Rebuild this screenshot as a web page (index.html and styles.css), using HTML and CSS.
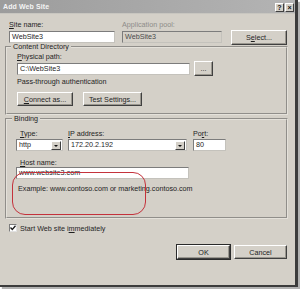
FILE: index.html
```html
<!DOCTYPE html>
<html>
<head>
<meta charset="utf-8">
<link rel="stylesheet" href="styles.css">
</head>
<body>
<div class="window">
  <div class="titlebar">
    <span class="title">Add Web Site</span>
    <div class="tb-btns"><span class="tb-btn">?</span><span class="tb-btn">×</span></div>
  </div>
  <div class="body">
    <div class="top-row">
      <div class="field site">
        <div class="lbl"><u>S</u>ite name:</div>
        <div class="input">WebSite3</div>
      </div>
      <div class="field pool">
        <div class="lbl disabled">Application pool:</div>
        <div class="input ro">WebSite3</div>
      </div>
      <div class="btn select">S<u>e</u>lect...</div>
    </div>

    <fieldset class="group cd">
      <legend>Content Directory</legend>
      <div class="lbl"><u>P</u>hysical path:</div>
      <div class="path-row">
        <div class="input path">C:\WebSite3</div>
        <div class="btn dots">...</div>
      </div>
      <div class="plain">Pass-through authentication</div>
      <div class="btn-row">
        <div class="btn connect"><u>C</u>onnect as...</div>
        <div class="btn test">Test Settin<u>g</u>s...</div>
      </div>
    </fieldset>

    <fieldset class="group binding">
      <legend>Binding</legend>
      <div class="brow">
        <div class="field type">
          <div class="lbl ind"><u>T</u>ype:</div>
          <div class="input combo"><span class="cval">http</span><span class="arrow"></span></div>
        </div>
        <div class="field ip">
          <div class="lbl"><u>I</u>P address:</div>
          <div class="input combo"><span class="cval">172.20.2.192</span><span class="arrow"></span></div>
        </div>
        <div class="field port">
          <div class="lbl">Po<u>r</u>t:</div>
          <div class="input">80</div>
        </div>
      </div>
      <div class="host">
        <div class="lbl ind"><u>H</u>ost name:</div>
        <div class="input hostin">www.website3.com</div>
      </div>
      <div class="example">Example: www.contoso.com or marketing.contoso.com</div>
    </fieldset>

    <div class="check-row">
      <span class="checkbox"><svg width="6" height="6" viewBox="0 0 6 6"><path d="M0.5 2.5 L2.3 4.5 L5.5 0.8" fill="none" stroke="#1a1a1a" stroke-width="1.3"/></svg></span>
      <span>Start Web site i<u>m</u>mediately</span>
    </div>

    <div class="footer">
      <div class="btn ok default">OK</div>
      <div class="btn cancel">Cancel</div>
    </div>
  </div>
  <div class="annotation"></div>
</div>
</body>
</html>
```
FILE: styles.css
```css
* { box-sizing: border-box; }
html, body { margin: 0; padding: 0; background: #ffffff; }
body {
  font-family: "Liberation Sans", Arial, sans-serif;
  font-size: 7.2px;
  color: #1e1e1e;
  width: 300px;
  height: 289px;
  overflow: hidden;
}
u { text-decoration: underline; text-underline-offset: 1px; }

.window {
  position: relative;
  width: 298px;
  height: 287px;
  background: #d4d0c8;
  border-right: 3px solid #3c3c3c;
  border-bottom: 2px solid #3c3c3c;
  box-shadow: 2px 2px 1px rgba(0, 0, 0, 0.3);
  display: flex;
  flex-direction: column;
}

.titlebar {
  height: 14px;
  flex: none;
  display: flex;
  align-items: center;
  justify-content: space-between;
  padding: 0 1px 0 3px;
  background: linear-gradient(to right, #9c9c9c, #b4b4b4);
  color: #f4f4f4;
  border-bottom: 1px solid #c8c6c0;
}
.title { font-weight: bold; font-size: 7px; letter-spacing: 0.1px; }
.tb-btns { display: flex; gap: 1px; margin-top: 1px; }
.tb-btn {
  width: 9px;
  height: 9px;
  background: #d4d0c8;
  border: 1px solid;
  border-color: #ffffff #404040 #404040 #ffffff;
  color: #111;
  font-weight: bold;
  font-size: 7px;
  line-height: 7px;
  text-align: center;
}

.body { padding: 7px 7px 0 5px; display: flex; flex-direction: column; }

.lbl { height: 8px; line-height: 8px; white-space: nowrap; }
.lbl.disabled { color: #8e8c88; }
.lbl.ind { padding-left: 4px; }

.input {
  height: 12px;
  background: #ffffff;
  border: 1px solid;
  border-color: #7c7c7c #c4c2bc #c4c2bc #7c7c7c;
  padding: 0 2px;
  line-height: 10px;
  white-space: nowrap;
  overflow: hidden;
}
.input.ro { background: #d4d0c8; color: #4a4a4a; }

.btn {
  background: #d4d0c8;
  border: 1px solid;
  border-color: #ffffff #404040 #404040 #ffffff;
  box-shadow: inset -1px -1px 0 #9a978f;
  display: flex;
  align-items: center;
  justify-content: center;
  white-space: nowrap;
}
.btn.default { outline: 1px solid #2a2a2a; outline-offset: 0; border-color: #ffffff #404040 #404040 #ffffff; }

.top-row { display: flex; align-items: flex-end; margin-left: 4px; }
.field .lbl { margin-bottom: 2px; }
.site { width: 106px; }
.pool { width: 100px; margin-left: 7px; }
.select { width: 56px; height: 15px; margin-left: 9px; margin-bottom: -2px; }

fieldset.group {
  margin: 0;
  min-width: 0;
  border: 2px groove #e4e1da;
}
legend { padding: 0 2px; line-height: 8px; height: 8px; white-space: nowrap; }

.cd { margin-top: 10px; padding: 2px 5px 7px 10px; }
.cd legend { margin-left: -6px; }
.path-row { display: flex; align-items: flex-end; height: 14px; }
.path { width: 173px; }
.dots { width: 19px; height: 15px; margin-left: 4px; margin-bottom: -1px; line-height: 6px; }
.plain { margin-top: 3px; height: 8px; line-height: 8px; }
.btn-row { margin-top: 6px; display: flex; gap: 10px; }
.connect { width: 56px; height: 14px; }
.test { width: 59px; height: 14px; }

.binding { margin-top: 6px; padding: 7px 5px 24px 9px; }
.binding legend { margin-left: -4px; }
.brow { display: flex; align-items: flex-end; }
.binding .field .lbl { margin-bottom: 1px; }
.type { width: 47px; }
.ip { width: 119px; margin-left: 5px; }
.port { width: 33px; margin-left: 6px; }
.combo { display: flex; align-items: center; padding-right: 1px; }
.cval { flex: 1; }
.arrow {
  width: 10px;
  height: 9px;
  background: #d4d0c8;
  border: 1px solid;
  border-color: #ffffff #404040 #404040 #ffffff;
  position: relative;
}
.arrow::after {
  content: "";
  position: absolute;
  left: 2px;
  top: 3px;
  border-left: 2px solid transparent;
  border-right: 2px solid transparent;
  border-top: 2px solid #111;
}
.host { margin-top: 8px; }
.hostin { width: 173px; }
.example { margin-top: 6px; height: 8px; line-height: 8px; padding-left: 2px; white-space: nowrap; }

.check-row { margin-top: 5px; margin-left: 4px; height: 8px; display: flex; align-items: center; gap: 3px; }
.checkbox {
  width: 8px;
  height: 8px;
  background: #fff;
  border: 1px solid;
  border-color: #7c7c7c #e0e0e0 #e0e0e0 #7c7c7c;
  display: flex;
  align-items: center;
  justify-content: center;
}

.footer { margin-top: 13px; display: flex; justify-content: flex-end; gap: 4px; margin-right: 1px; }
.ok, .cancel { width: 53px; height: 14px; }

.annotation {
  position: absolute;
  left: 12px;
  top: 172px;
  width: 134px;
  height: 43px;
  border: 1.5px solid #c4323c;
  border-radius: 13px;
  pointer-events: none;
}
```
